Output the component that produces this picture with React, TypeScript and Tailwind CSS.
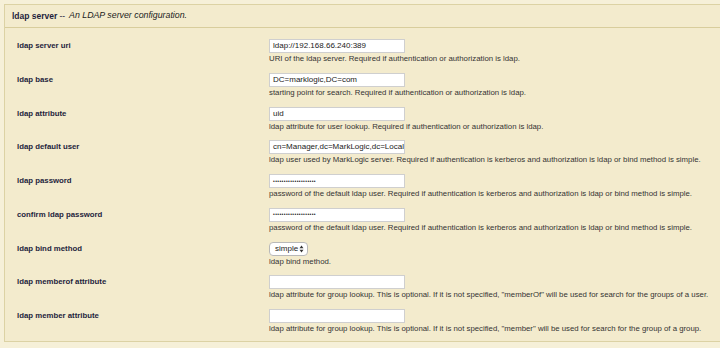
import React from "react";

interface Field {
  label: string;
  kind: "text" | "password" | "select";
  value?: string;
  help: string;
}

const fields: Field[] = [
  {
    label: "ldap server uri",
    kind: "text",
    value: "ldap://192.168.66.240:389",
    help: "URI of the ldap server. Required if authentication or authorization is ldap.",
  },
  {
    label: "ldap base",
    kind: "text",
    value: "DC=marklogic,DC=com",
    help: "starting point for search. Required if authentication or authorization is ldap.",
  },
  {
    label: "ldap attribute",
    kind: "text",
    value: "uid",
    help: "ldap attribute for user lookup. Required if authentication or authorization is ldap.",
  },
  {
    label: "ldap default user",
    kind: "text",
    value: "cn=Manager,dc=MarkLogic,dc=Local",
    help: "ldap user used by MarkLogic server. Required if authentication is kerberos and authorization is ldap or bind method is simple.",
  },
  {
    label: "ldap password",
    kind: "password",
    value: "••••••••••••••••••••",
    help: "password of the default ldap user. Required if authentication is kerberos and authorization is ldap or bind method is simple.",
  },
  {
    label: "confirm ldap password",
    kind: "password",
    value: "••••••••••••••••••••",
    help: "password of the default ldap user. Required if authentication is kerberos and authorization is ldap or bind method is simple.",
  },
  {
    label: "ldap bind method",
    kind: "select",
    value: "simple",
    help: "ldap bind method.",
  },
  {
    label: "ldap memberof attribute",
    kind: "text",
    value: "",
    help: 'ldap attribute for group lookup. This is optional. If it is not specified, "memberOf" will be used for search for the groups of a user.',
  },
  {
    label: "ldap member attribute",
    kind: "text",
    value: "",
    help: 'ldap attribute for group lookup. This is optional. If it is not specified, "member" will be used for search for the group of a group.',
  },
];

function FieldInput({ f }: { f: Field }) {
  if (f.kind === "select") {
    return (
      <div className="flex h-[14px] w-[39px] items-center justify-between rounded-[4px] border border-[#b9b9b9] bg-white pl-[5px] pr-[3px] text-[8px] leading-none text-[#222]">
        <span>{f.value}</span>
        <svg width="5" height="8" viewBox="0 0 5 8">
          <path d="M0.5 3.2 L2.5 0.6 L4.5 3.2 Z" fill="#333" />
          <path d="M0.5 4.8 L2.5 7.4 L4.5 4.8 Z" fill="#333" />
        </svg>
      </div>
    );
  }
  return (
    <div
      className={`flex h-[14px] w-[136px] items-center border border-[#cfcfcf] bg-white px-[3px] leading-none text-[#222] ${
        f.kind === "password" ? "text-[5px] tracking-[0.4px]" : "text-[8px]"
      }`}
    >
      {f.value}
    </div>
  );
}

export default function App() {
  return (
    <div className="h-[348px] w-[720px] overflow-hidden bg-[#f6f0d8] pl-[4px] pt-[4px] font-['Liberation_Sans',Arial,sans-serif]">
      <div className="h-[338px] border-b border-l border-t border-[#dcd2a4] bg-[#f3ebcd]">
        <div className="flex h-[23px] items-center border-b border-[#d8cd9c] pl-[7px] text-[8.5px] text-[#1e1e3c]">
          <span className="font-bold">ldap server</span>
          <span className="ml-[2px]">--</span>
          <span className="ml-[4px] text-[8.8px] italic text-[#222]">An LDAP server configuration.</span>
        </div>
        <div className="pt-[11px]">
          {fields.map((f) => (
            <div key={f.label} className="flex h-[33.75px]">
              <div className="w-[264px] pl-[12px] pt-[1px] text-[7.8px] font-bold leading-[11px] text-[#1e1e3c]">
                {f.label}
              </div>
              <div className="flex flex-col">
                <FieldInput f={f} />
                <div className="mt-[1px] whitespace-nowrap text-[7.8px] leading-[10px] text-[#333]">{f.help}</div>
              </div>
            </div>
          ))}
        </div>
      </div>
    </div>
  );
}
